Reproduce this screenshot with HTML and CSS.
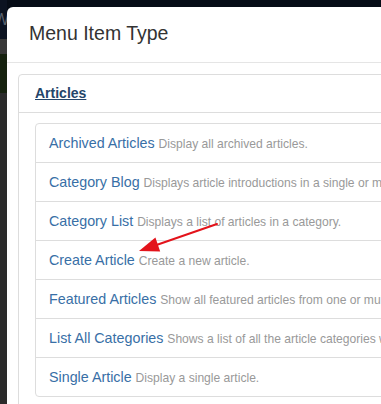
FILE: index.html
```html
<!DOCTYPE html>
<html>
<head>
<meta charset="utf-8">
<link rel="stylesheet" href="styles.css">
</head>
<body>
<div class="page">
  <div class="backdrop-strip">
    <div class="strip-nav"><span class="strip-letter">W</span></div>
    <div class="strip-gray"></div>
    <div class="strip-green"></div>
    <div class="strip-dark"></div>
  </div>
  <div class="stage">
    <div class="modal">
      <div class="modal-header">
        <h3 class="modal-title">Menu Item Type</h3>
      </div>
      <div class="modal-body">
        <div class="panel">
          <div class="panel-heading"><a class="panel-title" href="#">Articles</a></div>
          <div class="panel-body">
            <ul class="list-group">
              <li class="list-item"><a href="#">Archived Articles</a> <small>Display all archived articles.</small></li>
              <li class="list-item"><a href="#">Category Blog</a> <small>Displays article introductions in a single or multiple columns.</small></li>
              <li class="list-item"><a href="#">Category List</a> <small>Displays a list of articles in a category.</small></li>
              <li class="list-item"><a href="#">Create Article</a> <small>Create a new article.</small></li>
              <li class="list-item"><a href="#">Featured Articles</a> <small>Show all featured articles from one or multiple categories.</small></li>
              <li class="list-item"><a href="#">List All Categories</a> <small>Shows a list of all the article categories within a category.</small></li>
              <li class="list-item"><a href="#">Single Article</a> <small>Display a single article.</small></li>
            </ul>
          </div>
        </div>
      </div>
    </div>
  </div>
  <svg class="arrow" width="381" height="404" viewBox="0 0 381 404">
    <line x1="217" y1="224" x2="155" y2="245.5" stroke="#e3131b" stroke-width="2" stroke-linecap="round"/>
    <polygon points="139,251 160.2,251.5 155.4,237.6" fill="#e3131b"/>
  </svg>
</div>
</body>
</html>
```

FILE: styles.css
```css
html, body {
  margin: 0;
  padding: 0;
  height: 100%;
  overflow: hidden;
}
body {
  background: #0c1321;
  font-family: "Liberation Sans", Arial, sans-serif;
}
.page {
  position: relative;
  display: flex;
  width: 381px;
  height: 404px;
  overflow: hidden;
}
.backdrop-strip {
  width: 7px;
  flex: none;
  display: flex;
  flex-direction: column;
}
.strip-nav {
  height: 39px;
  background: #0c1321;
  overflow: hidden;
}
.strip-letter {
  display: block;
  margin: 12px 0 0 -6px;
  font-size: 16px;
  color: #5a626e;
  line-height: 16px;
}
.strip-gray {
  height: 15px;
  background: #383838;
}
.strip-green {
  height: 39px;
  background: #16220f;
}
.strip-dark {
  flex: 1;
  background: #2b2b2b;
}
.stage {
  flex: 1;
  padding-top: 7px;
  background: #060c16;
  min-width: 0;
}
.modal {
  width: 640px;
  height: 420px;
  background: #fff;
  border-top-left-radius: 6px;
}
.modal-header {
  height: 55px;
  border-bottom: 1px solid #e5e5e5;
  display: flex;
  align-items: center;
  padding-left: 22px;
}
.modal-title {
  margin: 0;
  font-size: 19.5px;
  font-weight: normal;
  color: #333;
  line-height: 22px;
  padding-bottom: 3px;
}
.modal-body {
  padding: 11px 0 0 11px;
}
.panel {
  border: 1px solid #ddd;
  border-radius: 4px;
  background: #fff;
}
.panel-heading {
  height: 37px;
  border-bottom: 1px solid #ddd;
  display: flex;
  align-items: center;
  padding-left: 16px;
}
.panel-title {
  font-size: 14px;
  font-weight: bold;
  color: #24456a;
  text-decoration: underline;
  line-height: 18px;
  padding-bottom: 2px;
}
.panel-body {
  padding: 10px 16px;
}
.list-group {
  list-style: none;
  margin: 0;
  padding: 0;
  border: 1px solid #ddd;
  border-radius: 4px;
}
.list-item {
  padding: 10px 13px;
  height: 18px;
  font-size: 14px;
  line-height: 18px;
  white-space: nowrap;
  border-top: 1px solid #ddd;
}
.list-item:first-child {
  border-top: none;
}
.list-item a {
  font-size: 14.3px;
  color: #386fa6;
  text-decoration: none;
}
.list-item small {
  font-size: 12.1px;
  line-height: 1;
  color: #999;
}
.arrow {
  position: absolute;
  left: 0;
  top: 0;
  pointer-events: none;
}
```
